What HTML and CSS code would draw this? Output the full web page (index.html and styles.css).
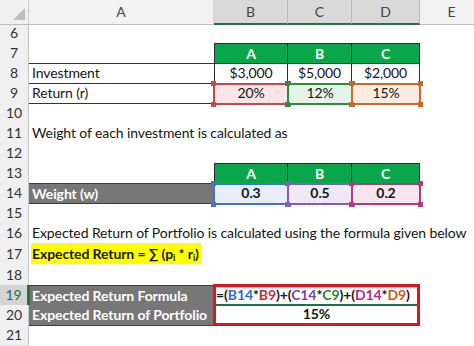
FILE: index.html
```html
<!DOCTYPE html>
<html>
<head>
<meta charset="utf-8">
<link rel="stylesheet" href="styles.css">
</head>
<body>
<div class="sheet">
  <div class="row hdr">
    <div class="corner"><span class="tri"></span></div>
    <div class="ch">A</div>
    <div class="ch sel">B</div>
    <div class="ch sel">C</div>
    <div class="ch sel">D</div>
    <div class="ch">E</div>
  </div>
  <div class="row"><div class="rn">6</div></div>
  <div class="row">
    <div class="rn">7</div>
    <div class="c line-b"></div>
    <div class="c g first">A</div>
    <div class="c g">B</div>
    <div class="c g">C</div>
  </div>
  <div class="row">
    <div class="rn">8</div>
    <div class="c line-b">Investment</div>
    <div class="c ctr w first">$3,000</div>
    <div class="c ctr w">$5,000</div>
    <div class="c ctr w">$2,000</div>
  </div>
  <div class="row">
    <div class="rn">9</div>
    <div class="c line-b">Return (r)</div>
    <div class="c ctr ref red">20%</div>
    <div class="c ctr ref grn">12%</div>
    <div class="c ctr ref org">15%</div>
  </div>
  <div class="row"><div class="rn">10</div></div>
  <div class="row">
    <div class="rn">11</div>
    <div class="c">Weight of each investment is calculated as</div>
  </div>
  <div class="row"><div class="rn">12</div></div>
  <div class="row">
    <div class="rn">13</div>
    <div class="c"></div>
    <div class="c g first">A</div>
    <div class="c g">B</div>
    <div class="c g">C</div>
  </div>
  <div class="row">
    <div class="rn">14</div>
    <div class="c dark dark-tb">Weight (w)</div>
    <div class="c ctr b ref blu">0.3</div>
    <div class="c ctr b ref pur">0.5</div>
    <div class="c ctr b ref mag">0.2</div>
  </div>
  <div class="row"><div class="rn">15</div></div>
  <div class="row">
    <div class="rn">16</div>
    <div class="c">Expected Return of Portfolio is calculated using the formula given below</div>
  </div>
  <div class="row r17">
    <div class="rn">17</div>
    <div class="c hl-cell"><span class="hl">Expected Return = ∑ (p<sub>i</sub> * r<sub>i</sub>)</span></div>
  </div>
  <div class="row"><div class="rn">18</div></div>
  <div class="row">
    <div class="rn rsel">19</div>
    <div class="c dark dark-t">Expected Return Formula</div>
    <div class="c span3 box-top">=(<span class="fb">B14</span>*<span class="fr">B9</span>)+(<span class="fp">C14</span>*<span class="fg">C9</span>)+(<span class="fm">D14</span>*<span class="fo">D9</span>)</div>
  </div>
  <div class="row">
    <div class="rn">20</div>
    <div class="c dark dark-b">Expected Return of Portfolio</div>
    <div class="c span3 box-bot ctr">15%</div>
  </div>
  <div class="row"><div class="rn">21</div></div>
</div>
</body>
</html>
```
FILE: styles.css
```css
* { box-sizing: border-box; }
html, body { margin: 0; padding: 0; }
body {
  width: 474px;
  height: 346px;
  overflow: hidden;
  background: #fff;
  font-family: Lato, "Open Sans", sans-serif;
  font-size: 14px;
  letter-spacing: -0.1px;
  color: #151515;
}
.sheet { width: 474px; }
.row {
  display: grid;
  grid-template-columns: 29px 185px 74px 64px 68px 64px;
  height: 20px;
}
.r17 { height: 22px; }
.hdr { height: 23px; }

.corner {
  position: relative;
  background: #f0f0f0;
  border-right: 1px solid #cfcfcf;
  border-bottom: 1px solid #bdbdbd;
}
.tri {
  position: absolute;
  right: 3px;
  bottom: 4px;
  width: 0;
  height: 0;
  border-left: 12px solid transparent;
  border-bottom: 12px solid #bdbdbd;
}
.ch {
  background: #f2f2f2;
  border-right: 1px solid #d0d0d0;
  border-bottom: 1px solid #bdbdbd;
  text-align: center;
  line-height: 23px;
  color: #444;
}
.ch.sel {
  background: #d9d9d9;
  border-right-color: #b8b8b8;
  border-bottom: 2px solid #217346;
}

.rn {
  background: #f0f0f0;
  border-right: 1px solid #c6c6c6;
  border-bottom: 1px solid #dedede;
  text-align: center;
  line-height: 20px;
  color: #333;
}
.r17 .rn { line-height: 22px; }
.rn.rsel {
  background: #d4d4d4;
  color: #217346;
  border-right: 2px solid #217346;
}

.c {
  padding: 0 3px;
  line-height: 19px;
  white-space: nowrap;
}
.ctr { text-align: center; }
.b { font-weight: bold; }
.line-b { border-bottom: 1px solid #333; }

.g {
  background: #0aa64c;
  color: #fff;
  font-weight: bold;
  text-align: center;
  border-top: 1px solid #2b2b2b;
  border-right: 1px solid #2b2b2b;
  border-bottom: 1px solid #2b2b2b;
}
.first { border-left: 1px solid #2b2b2b; }
.w {
  border-right: 1px solid #2b2b2b;
  border-bottom: 1px solid #2b2b2b;
}

.ref {
  position: relative;
  background: var(--f);
}
.ref::before {
  content: "";
  position: absolute;
  left: -1px; right: -1px; top: 0; bottom: -1px;
  border: 2px solid var(--c);
}
.ref::after {
  content: "";
  position: absolute;
  left: -3px; right: -3px; top: -2px; bottom: -3px;
  background:
    linear-gradient(var(--c), var(--c)) left top / 5px 5px no-repeat,
    linear-gradient(var(--c), var(--c)) right top / 5px 5px no-repeat,
    linear-gradient(var(--c), var(--c)) left bottom / 5px 5px no-repeat,
    linear-gradient(var(--c), var(--c)) right bottom / 5px 5px no-repeat;
}
.red { --c: #c04a52; --f: #fbe6e7; }
.grn { --c: #2e8b3e; --f: #e6f4e8; }
.org { --c: #c96a2a; --f: #fcece2; }
.blu { --c: #4a72c4; --f: #e8edf8; }
.pur { --c: #8a5bb5; --f: #efe8f6; }
.mag { --c: #b03c7c; --f: #f8e6ef; }

.dark {
  background: #777;
  color: #fff;
  font-weight: bold;
}
.dark-tb { border-top: 1px solid #3c3c3c; border-bottom: 1px solid #3c3c3c; }
.dark-t { border-top: 1px solid #3c3c3c; border-bottom: 1px solid #9a9a9a; border-left: 1px solid #217346; padding-left: 2px; }
.dark-b { border-bottom: 1px solid #3c3c3c; }

.hl-cell { line-height: 22px; padding-left: 2px; }
.hl {
  display: inline-block;
  background: #ffff00;
  font-weight: bold;
  padding: 0 2px 0 1px;
  line-height: 21px;
}
.hl sub { font-size: 9px; vertical-align: -2px; line-height: 0; }

.span3 { grid-column: span 3; }
.box-top {
  border: 3px solid #e3131b;
  border-bottom: 2px solid #1e7145;
  padding: 0;
  margin-left: -1px;
  margin-top: -1px;
  font-weight: bold;
  line-height: 16px;
}
.box-bot {
  border: 3px solid #e3131b;
  border-top: none;
  margin-left: -1px;
  font-weight: bold;
  line-height: 17px;
}
.fb { color: #2f6fc0; }
.fr { color: #c0343c; }
.fp { color: #7a45a8; }
.fg { color: #1b8a3a; }
.fm { color: #b02f7c; }
.fo { color: #c75b16; }
```
